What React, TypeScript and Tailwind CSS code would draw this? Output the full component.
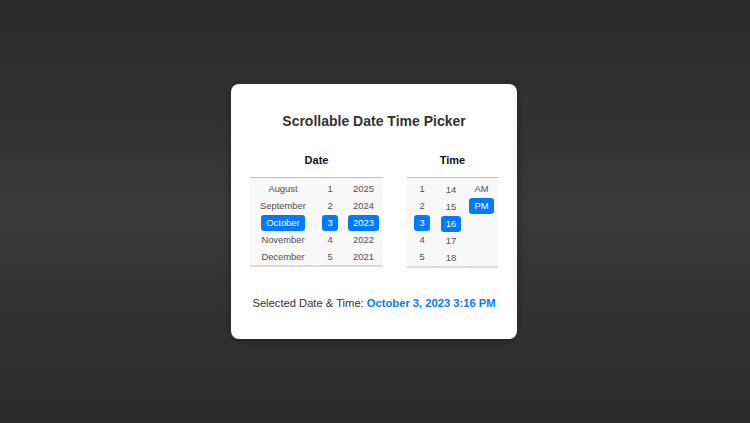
import React from "react";

type Col = { items: string[]; sel: number; w: string; pt?: string };

function Column({ items, sel, w, pt }: Col) {
  return (
    <div className={`flex flex-col items-center bg-[#f8f8f8] rounded-[4px] pt-[2px] ${w} ${pt ?? ""}`}>
      {items.map((it, i) => (
        <div key={it} className="h-[17px] flex items-center justify-center">
          {i === sel ? (
            <span className="h-[16px] px-[5px] rounded-[3px] bg-[#007bff] text-white leading-[16px]">{it}</span>
          ) : (
            <span className="leading-[16px] text-[#505050]">{it}</span>
          )}
        </div>
      ))}
    </div>
  );
}

function Picker({ title, cols }: { title: string; cols: Col[] }) {
  return (
    <div className="flex flex-col items-center">
      <div className="text-[11px] leading-[13px] font-bold text-[#111]">{title}</div>
      <div className="mt-[10px] flex bg-white border-t border-[#bdbdbd] border-b-2 border-b-[#dcdcdc] text-[9.4px]">
        {cols.map((c, i) => (
          <Column key={i} {...c} />
        ))}
      </div>
    </div>
  );
}

export default function App() {
  return (
    <div
      className="w-[750px] h-[423px] flex items-center justify-center bg-linear-to-b from-[#2a2a2a] via-[#393939] to-[#2b2b2b]"
      style={{ fontFamily: '"Liberation Sans", Arial, sans-serif' }}
    >
      <div className="mr-[2px] w-[286px] h-[255px] bg-white rounded-[8px] shadow-[0_2px_8px_rgba(0,0,0,0.3)] flex flex-col items-center pt-[29px]">
        <h1 className="text-[14px] leading-[17px] font-bold text-[#333]">Scrollable Date Time Picker</h1>
        <div className="mt-[24px] flex gap-[24px] items-start">
          <div className="w-[133px]">
            <Picker
              title="Date"
              cols={[
                { items: ["August", "September", "October", "November", "December"], sel: 2, w: "w-[66px]" },
                { items: ["1", "2", "3", "4", "5"], sel: 2, w: "w-[28px]" },
                { items: ["2025", "2024", "2023", "2022", "2021"], sel: 2, w: "w-[39px]" },
              ]}
            />
          </div>
          <div className="w-[91px]">
            <Picker
              title="Time"
              cols={[
                { items: ["1", "2", "3", "4", "5"], sel: 2, w: "w-[30px]" },
                { items: ["14", "15", "16", "17", "18"], sel: 2, w: "w-[28px]", pt: "pt-[3px]" },
                { items: ["AM", "PM"], sel: 1, w: "w-[33px]" },
              ]}
            />
          </div>
        </div>
        <p className="mt-[28px] text-[11.2px] leading-[14px] text-[#333]">
          Selected Date &amp; Time: <span className="font-bold text-[#007bff]">October 3, 2023 3:16 PM</span>
        </p>
      </div>
    </div>
  );
}
